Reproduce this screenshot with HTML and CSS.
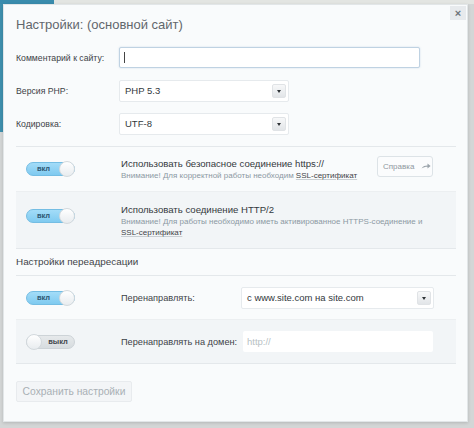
FILE: index.html
```html
<!DOCTYPE html>
<html lang="ru">
<head>
<meta charset="utf-8">
<title>Настройки</title>
<link rel="stylesheet" href="styles.css">
</head>
<body>
<div class="dialog">
  <button class="close" type="button">×</button>
  <h1 class="title">Настройки: (основной сайт)</h1>

  <div class="fields">
    <div class="field">
      <span class="label">Комментарий к сайту:</span>
      <div class="input input-wide focus"><span class="caret"></span></div>
    </div>
    <div class="field">
      <span class="label">Версия PHP:</span>
      <div class="select select-short"><span class="value">PHP 5.3</span><span class="arrow"></span></div>
    </div>
    <div class="field">
      <span class="label">Кодировка:</span>
      <div class="select select-short"><span class="value">UTF-8</span><span class="arrow"></span></div>
    </div>
  </div>

  <div class="rows rows-top">
    <div class="row">
      <div class="tcol"><span class="toggle on"><span class="ttext">вкл</span><span class="knob"></span></span></div>
      <div class="rtext">
        <div class="rtitle">Использовать безопасное соединение https://</div>
        <div class="rsub nowrap">Внимание! Для корректной работы необходим <span class="ssl">SSL-сертификат</span></div>
      </div>
      <button class="help" type="button"><span>Справка</span><svg class="harrow" width="10" height="7" viewBox="0 0 10 7"><path d="M0.5 5.5 C2 3.2 4 2.6 6.5 2.6 L6.5 0.6 L9.6 3.1 L6.5 5.6 L6.5 3.7 C4.2 3.7 2.4 4.3 0.5 5.5 Z" fill="#9aa3aa"/></svg></button>
    </div>
    <div class="row row-alt row-tall">
      <div class="tcol tcol-up"><span class="toggle on"><span class="ttext">вкл</span><span class="knob"></span></span></div>
      <div class="rtext">
        <div class="rtitle">Использовать соединение HTTP/2</div>
        <div class="rsub">Внимание! Для работы необходимо иметь активированное HTTPS-соединение и <span class="ssl">SSL-сертификат</span></div>
      </div>
    </div>
  </div>

  <h2 class="section">Настройки переадресации</h2>

  <div class="rows">
    <div class="row row-mid">
      <div class="tcol"><span class="toggle on"><span class="ttext">вкл</span><span class="knob"></span></span></div>
      <span class="rlabel">Перенаправлять:</span>
      <div class="select select-redirect"><span class="value">с www.site.com на site.com</span><span class="arrow"></span></div>
    </div>
    <div class="row row-alt">
      <div class="tcol"><span class="toggle off"><span class="knob"></span><span class="ttext">выкл</span></span></div>
      <span class="rlabel">Перенаправлять на домен:</span>
      <div class="input input-domain"><span class="placeholder">http://</span></div>
    </div>
  </div>

  <div class="actions">
    <button class="save" type="button">Сохранить настройки</button>
  </div>
</div>
</body>
</html>
```

FILE: styles.css
```css
* { box-sizing: border-box; }

html, body { margin: 0; padding: 0; }

body {
  width: 474px;
  height: 428px;
  overflow: hidden;
  font-family: "Liberation Sans", Arial, sans-serif;
  color: #3a3f44;
  background:
    linear-gradient(#3a8cad, #3a8cad) 0 0 / 54px 4px no-repeat,
    linear-gradient(#3f90ae, #3f90ae) 0 0 / 3px 132px no-repeat,
    linear-gradient(#e3e5e2, #e3e5e2) 0 0 / 474px 4px no-repeat,
    #d3d6d6;
  padding: 4px 6px 6px 3px;
}

.dialog {
  position: relative;
  width: 465px;
  height: 418px;
  background: #f9fbfc;
  border: 1px solid #e2e6e8;
  box-shadow: 0 1px 3px rgba(0,0,0,0.15);
  padding: 10px 11px 0 12px;
}

.close {
  position: absolute;
  top: 1px;
  right: 1px;
  width: 16px;
  height: 14px;
  border: 0;
  padding: 0;
  background: #e7eaed;
  color: #6d747a;
  font: bold 11px/14px "Liberation Sans", Arial, sans-serif;
  text-align: center;
}

.title {
  margin: 0;
  font-weight: normal;
  font-size: 13px;
  line-height: 20px;
  color: #62676c;
  height: 20px;
  white-space: nowrap;
}

.fields {
  margin-top: 12px;
  display: flex;
  flex-direction: column;
  gap: 12px;
  padding-bottom: 12px;
}

.field {
  display: flex;
  align-items: center;
  height: 21px;
}

.label {
  width: 103px;
  font-size: 8.7px;
  color: #3d4247;
  white-space: nowrap;
}

.input {
  height: 21px;
  background: #fff;
  border: 1px solid #e6eaed;
  border-radius: 2px;
  display: flex;
  align-items: center;
  padding-left: 4px;
}

.input-wide { width: 301px; }

.focus {
  border: 1px solid #bfd2e2;
  box-shadow: 0 0 2px rgba(120,160,200,0.35);
}

.caret {
  width: 1px;
  height: 11px;
  background: #444;
}

.select {
  height: 22px;
  background: #fff;
  border: 1px solid #e6eaed;
  border-radius: 2px;
  display: flex;
  align-items: center;
  justify-content: space-between;
  padding: 0 2px 0 5px;
}

.select-short { width: 170px; }

.select .value {
  font-size: 9.5px;
  color: #33383c;
  white-space: nowrap;
}

.arrow {
  width: 14px;
  height: 14px;
  border-radius: 2px;
  background: linear-gradient(#f7f8f9, #e2e5e8);
  border: 1px solid #e0e3e6;
  position: relative;
  flex: none;
}

.arrow::after {
  content: "";
  position: absolute;
  left: 4px;
  top: 5px;
  border-left: 2.5px solid transparent;
  border-right: 2.5px solid transparent;
  border-top: 3px solid #2e3236;
}

.rows {
  border-top: 1px solid #e4e8eb;
  border-bottom: 1px solid #e4e8eb;
}

.row {
  display: flex;
  align-items: center;
  height: 44px;
}

.row-tall { height: 57px; }
.row-mid { height: 43px; }

.row-alt {
  background: #f2f5f7;
  border-top: 1px solid #eceff1;
}

.tcol {
  width: 105px;
  padding-left: 10px;
  display: flex;
  align-items: center;
  flex: none;
}

.tcol-up { margin-top: -9px; }

.toggle {
  width: 49px;
  height: 14px;
  border-radius: 7px;
  display: flex;
  align-items: center;
  position: relative;
}

.toggle.on {
  background: linear-gradient(#a3dcf8, #7fcaf0);
  border: 1px solid #74bde3;
}

.toggle.off {
  background: linear-gradient(#e6e9eb, #d7dcdf);
  border: 1px solid #cdd3d7;
}

.ttext {
  flex: 1;
  text-align: center;
  font-size: 7.5px;
  font-weight: bold;
  color: #2f5670;
  line-height: 12px;
}

.toggle.off .ttext { color: #3f464b; }

.knob {
  width: 16px;
  height: 16px;
  border-radius: 50%;
  background: linear-gradient(#ffffff, #e8ecef);
  border: 1px solid #d3d9dd;
  margin: -2px -1px;
  flex: none;
}

.toggle.off .knob { margin: -2px 0 -2px -1px; }

.rtext {
  flex: 1;
  min-width: 0;
}

.rtitle {
  font-size: 9.6px;
  line-height: 13px;
  color: #34393d;
  white-space: nowrap;
}

.rsub {
  font-size: 8px;
  line-height: 11px;
  color: #8c99a3;
  padding-right: 0;
}

.nowrap { white-space: nowrap; }

.ssl {
  color: #3f4448;
  text-decoration: underline;
  text-decoration-color: #c9cfd3;
  white-space: nowrap;
}

.help {
  width: 56px;
  height: 21px;
  margin-right: 23px;
  margin-top: -6px;
  background: #fbfcfd;
  border: 1px solid #dde3e7;
  border-radius: 3px;
  padding: 0 0 0 5px;
  display: flex;
  align-items: center;
  gap: 7px;
  font-family: "Liberation Sans", Arial, sans-serif;
  font-size: 8px;
  color: #8f989f;
  white-space: nowrap;
  flex: none;
}

.harrow { flex: none; }

.section {
  margin: 0;
  font-weight: normal;
  font-size: 9.9px;
  line-height: 26px;
  height: 26px;
  color: #3f4448;
  white-space: nowrap;
}

.rlabel {
  width: 120px;
  font-size: 9.2px;
  color: #3d4247;
  white-space: nowrap;
  flex: none;
}

.row-alt .rlabel { width: 122px; }

.select-redirect {
  width: 193px;
}

.input-domain {
  width: 190px;
  height: 21px;
  border: 0;
  border-radius: 2px;
}

.placeholder {
  font-size: 9.5px;
  color: #b8bfc4;
}

.actions {
  padding-top: 17px;
}

.save {
  width: 116px;
  height: 21px;
  background: #f3f5f7;
  border: 1px solid #e8ebee;
  border-radius: 2px;
  padding: 0;
  font-family: "Liberation Sans", Arial, sans-serif;
  font-size: 10.3px;
  color: #a9b0b5;
  white-space: nowrap;
}
```
